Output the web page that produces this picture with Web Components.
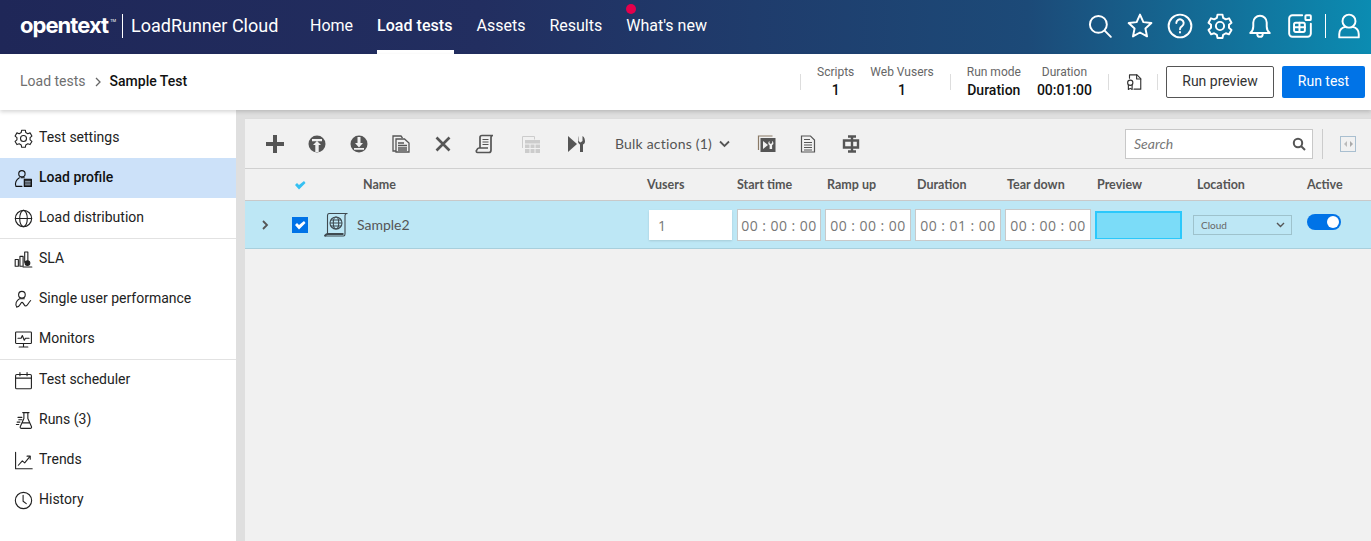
<!DOCTYPE html>
<html lang="en">
<head>
<meta charset="utf-8">
<title>LoadRunner Cloud</title>
<style>
  html, body { margin: 0; height: 541px; overflow: hidden; background: #dfdfdf; }
  body { font-family: Roboto, "Liberation Sans", sans-serif; display: flex; flex-direction: column; }
  .main { display: flex; flex: 1; min-height: 0; }
</style>
</head>
<body>
<lr-header></lr-header>
<lr-subbar></lr-subbar>
<div class="main">
  <lr-sidenav>
    <lr-nav-item icon="gear">Test settings</lr-nav-item>
    <lr-nav-item icon="profile" active>Load profile</lr-nav-item>
    <lr-nav-item icon="globe" divider>Load distribution</lr-nav-item>
    <lr-nav-item icon="sla">SLA</lr-nav-item>
    <lr-nav-item icon="single">Single user performance</lr-nav-item>
    <lr-nav-item icon="monitor" divider>Monitors</lr-nav-item>
    <lr-nav-item icon="calendar">Test scheduler</lr-nav-item>
    <lr-nav-item icon="flask">Runs (3)</lr-nav-item>
    <lr-nav-item icon="trends">Trends</lr-nav-item>
    <lr-nav-item icon="clock">History</lr-nav-item>
  </lr-sidenav>
  <lr-workspace></lr-workspace>
</div>

<script>
const ICONS = {
  search: '<circle cx="10.500" cy="10.500" r="7.800"/><path d="M16.300 16.300l5.700 5.700"/>',
  star: '<path d="M12 1.500l3.100 6.900 7.400.9-5.500 5 1.500 7.300L12 18l-6.500 3.600L7 14.300l-5.500-5 7.400-.9z"/>',
  help: '<circle cx="12" cy="12" r="10.500"/><path d="M8.600 9.300a3.400 3.400 0 1 1 5.300 2.800c-1.300.8-1.900 1.400-1.900 2.900"/><path d="M12 17.600v.5"/>',
  gear: '<circle cx="12" cy="12" r="3.800"/><path d="M9.700 1.500h4.600l.6 3 2.500 1.400 2.900-1 2.300 4-2.300 2v2.800l2.300 2-2.300 4-2.900-1-2.500 1.400-.6 3H9.700l-.6-3-2.500-1.400-2.900 1-2.300-4 2.300-2v-2.800l-2.300-2 2.300-4 2.900 1 2.500-1.400z"/>',
  bell: '<path d="M3 18.500c1.700-1.500 2.800-3 2.800-6V8.800a6.200 6.200 0 0 1 12.400 0v3.700c0 3 1.100 4.500 2.800 6z"/><path d="M9.500 19.500a2.500 2.500 0 0 0 5 0"/>',
  apps: '<path d="M14 2H5a3 3 0 0 0-3 3v14a3 3 0 0 0 3 3h14a3 3 0 0 0 3-3v-9"/><rect x="6.500" y="9" width="10" height="8.500" rx="1.500"/><path d="M11.500 9v8.500M6.500 13.200h10"/><rect x="17" y="2" width="5" height="4.500" rx=".8"/>',
  user: '<circle cx="12" cy="7.500" r="6"/><path d="M3 22.500v-3c0-3.500 2.500-6 5.700-6.700M21 22.500v-3c0-3.500-2.500-6-5.700-6.700M3 22.500h18"/>',
  cert: '<path d="M6 7V2.500h10l5 5v14H12"/><path d="M15.500 2.500v5.500H21"/><circle cx="7" cy="13" r="3.500"/><path d="M4.500 16v6l2.500-1.500L9.500 22v-6"/>',
  profile: '<circle cx="10" cy="6" r="4"/><path d="M6.800 11C3 13 .5 18 2.500 22H10M13 11H9"/><rect x="13" y="13" width="9" height="9" fill="currentColor"/><path d="M14.500 15.500h6M14.500 17.700h6M14.500 20h6" stroke="#cce1f9" stroke-width="1"/>',
  globe: '<circle cx="12" cy="12" r="10.300"/><ellipse cx="12" cy="12" rx="4.800" ry="10.300"/><path d="M1.700 12h20.600"/>',
  sla: '<rect x="1.500" y="12" width="4" height="8.500"/><rect x="7.500" y="8" width="4" height="12.500"/><rect x="13.500" y="2.500" width="4" height="13"/><circle cx="17" cy="16.500" r="3" fill="currentColor"/><path d="M11.500 21.500h11"/>',
  single: '<circle cx="10" cy="6" r="4.200"/><path d="M3.500 21.500c-2.500-3.500-.5-8.500 3.500-10.500h6"/><path d="M3.500 21.500c2.500 0 3.500-1.500 4.500-3.500s2-3.500 3.500-1.500 2 4.500 4 3.500 3-4.500 5.500-6.500"/>',
  monitor: '<rect x="2" y="2.500" width="20" height="14.500" rx="1"/><path d="M12 17v4.500M6.500 21.500h11M5 10.500h4l1.500-3.500 2.500 6 1.500-2.500h4.500"/>',
  calendar: '<rect x="2" y="4.500" width="20" height="18" rx="1.500"/><path d="M2 9h20M7.500 2v4M16.500 2v4"/>',
  flask: '<path d="M11 2h8M12.500 2v7.500L8 19.500c-.6 1.400 0 2.500 1.500 2.500h11c1.500 0 2.100-1.100 1.500-2.500l-4.500-10V2M10 15h10M5 8h5M6 11h4M4 14h3.500M3 17h3"/>',
  trends: '<path d="M2 1.500v21h21"/><path d="M5.500 18l5-5.500 3 2.500 6.500-8"/><path d="M16.500 6.500h4v4"/>',
  clock: '<circle cx="12" cy="12" r="10.300"/><path d="M11.500 5.500v7.500l4 3"/>'
};

class LrIcon extends HTMLElement {
  connectedCallback() {
    const size = this.getAttribute('size') || 18;
    const stroke = this.getAttribute('stroke') || 1.6;
    this.attachShadow({ mode: 'open' }).innerHTML = `
      <style>
        :host { display: inline-flex; width: ${size}px; height: ${size}px; flex: none; }
        svg { width: 100%; height: 100%; }
      </style>
      <svg viewBox="0 0 24 24" fill="none" stroke="currentColor" stroke-width="${stroke}" stroke-linecap="round" stroke-linejoin="round">${ICONS[this.getAttribute('name')]}</svg>`;
  }
}
customElements.define('lr-icon', LrIcon);

class LrHeader extends HTMLElement {
  constructor() {
    super();
    this.attachShadow({ mode: 'open' }).innerHTML = `
      <style>
        :host { display: flex; align-items: center; height: 54px; flex: none; color: #fff; padding-left: 20px;
          background: linear-gradient(90deg, #1f2758 0%, #222e60 35%, #1c4a78 75%, #0b8cb2 100%); }
        .logo { font: 700 22px Inter, Lato, sans-serif; letter-spacing: -.95px; width: 87px; white-space: nowrap; padding-bottom: 4px; }
        .tm { font: 400 4px Roboto, sans-serif; vertical-align: 11px; letter-spacing: 0; margin-left: 2px; }
        .bar { width: 1px; height: 24px; background: #fff; }
        .logo + .bar { margin-left: 15px; margin-bottom: 2px; }
        .product { font-size: 18px; margin-left: 8px; width: 179px; white-space: nowrap; padding-bottom: 4px; }
        nav { display: flex; gap: 24px; height: 100%; }
        a { position: relative; display: flex; align-items: center; font-size: 16px; color: #fff; padding-bottom: 3px; box-sizing: border-box; }
        a.on { font-weight: 500; letter-spacing: .04px; }
        a.on::after { content: ""; position: absolute; left: 0; right: -1px; bottom: 0; height: 4px; background: #fff; }
        .dot { position: absolute; left: 0; top: 4px; width: 10px; height: 10px; border-radius: 50%; background: #e5004c; }
        .tools { display: flex; align-items: center; margin-left: auto; padding-right: 9px; gap: 14px; padding-bottom: 2px; }
        .tools .bar { margin: 0 -4px 0 -2px; }
      </style>
      <span class="logo">opentext<span class="tm">TM</span></span>
      <span class="bar"></span>
      <span class="product">LoadRunner Cloud</span>
      <nav>
        <a>Home</a>
        <a class="on">Load tests</a>
        <a>Assets</a>
        <a>Results</a>
        <a><span class="dot"></span>What's new</a>
      </nav>
      <div class="tools">
        <lr-icon name="search" size="26" stroke="1.800"></lr-icon>
        <lr-icon name="star" size="26" stroke="1.800"></lr-icon>
        <lr-icon name="help" size="26" stroke="1.800"></lr-icon>
        <lr-icon name="gear" size="26" stroke="1.800"></lr-icon>
        <lr-icon name="bell" size="26" stroke="1.800"></lr-icon>
        <lr-icon name="apps" size="26" stroke="1.800"></lr-icon>
        <span class="bar"></span>
        <lr-icon name="user" size="26" stroke="1.800"></lr-icon>
      </div>`;
  }
}
customElements.define('lr-header', LrHeader);

class LrStat extends HTMLElement {
  constructor() {
    super();
    this.attachShadow({ mode: 'open' }).innerHTML = `
      <style>
        :host { display: flex; flex-direction: column; align-items: center; gap: 1px; }
        .k { font-size: 12px; line-height: 16px; color: #666; white-space: nowrap; }
        .v { font-size: 14px; line-height: 18px; font-weight: 500; color: #111; white-space: nowrap; }
      </style>
      <span class="k"><slot name="label"></slot></span>
      <span class="v"><slot></slot></span>`;
  }
}
customElements.define('lr-stat', LrStat);

class LrSubbar extends HTMLElement {
  constructor() {
    super();
    this.attachShadow({ mode: 'open' }).innerHTML = `
      <style>
        :host { display: flex; align-items: center; height: 56px; flex: none; background: #fff; padding: 0 6px 0 20px;
          font-size: 14px; position: relative; z-index: 2; box-shadow: 0 2px 4px rgba(0,0,0,.16); }
        .crumb { color: #6f6f6f; padding-bottom: 2px; }
        svg { width: 8px; height: 10px; margin: 0 8px; color: #666; }
        .cur { font-weight: 500; color: #111; padding-bottom: 2px; }
        .right { display: flex; align-items: center; margin-left: auto; }
        .sep { width: 1px; height: 16px; background: #ddd; }
        lr-stat { margin-top: -1px; }
        .btn { height: 32px; box-sizing: border-box; display: flex; align-items: center; justify-content: center; border-radius: 2px; font-size: 14px; padding-bottom: 2px; }
        .ghost { width: 108px; border: 1px solid #555; color: #333; }
        .primary { width: 83px; background: #0073e7; color: #fff; margin-left: 8px; }
      </style>
      <span class="crumb">Load tests</span>
      <svg viewBox="0 0 8 10" fill="none" stroke="currentColor" stroke-width="1.300"><path d="M2 1l4 4-4 4"/></svg>
      <span class="cur">Sample Test</span>
      <div class="right">
        <span class="sep"></span>
        <lr-stat style="margin-left:16px"><span slot="label">Scripts</span>1</lr-stat>
        <lr-stat style="margin-left:16px"><span slot="label">Web Vusers</span>1</lr-stat>
        <span class="sep" style="margin-left:16px"></span>
        <lr-stat style="margin-left:16px"><span slot="label">Run mode</span>Duration</lr-stat>
        <lr-stat style="margin-left:16px"><span slot="label">Duration</span>00:01:00</lr-stat>
        <span class="sep" style="margin-left:16px"></span>
        <lr-icon name="cert" size="18" stroke="1.500" style="margin-left:16px;color:#333"></lr-icon>
        <span class="sep" style="margin-left:14px"></span>
        <span class="btn ghost" style="margin-left:8px">Run preview</span>
        <span class="btn primary">Run test</span>
      </div>`;
  }
}
customElements.define('lr-subbar', LrSubbar);

class LrSidenav extends HTMLElement {
  constructor() {
    super();
    this.attachShadow({ mode: 'open' }).innerHTML = `
      <style>
        :host { display: block; width: 236px; flex: none; background: #fff; padding-top: 8px; box-sizing: border-box; }
      </style>
      <slot></slot>`;
  }
}
customElements.define('lr-sidenav', LrSidenav);

class LrNavItem extends HTMLElement {
  connectedCallback() {
    this.attachShadow({ mode: 'open' }).innerHTML = `
      <style>
        :host { display: flex; align-items: center; height: 40px; padding-left: 14px; gap: 6px; font-size: 14px; color: #222; }
        :host([active]) { background: #cce1f9; font-weight: 500; color: #111; }
        :host([divider]) { border-bottom: 1px solid #e2e2e2; }
        span { padding-bottom: 2px; }
      </style>
      <lr-icon name="${this.getAttribute('icon')}" size="19" stroke="1.400"></lr-icon>
      <span><slot></slot></span>`;
  }
}
customElements.define('lr-nav-item', LrNavItem);

class LrTool extends HTMLElement {
  constructor() {
    super();
    this.attachShadow({ mode: 'open' }).innerHTML = `
      <style>
        :host { display: inline-flex; width: 20px; height: 20px; align-items: center; justify-content: center; flex: none; }
        ::slotted(svg) { width: 20px; height: 20px; }
      </style>
      <slot></slot>`;
  }
}
customElements.define('lr-tool', LrTool);

class LrToolbar extends HTMLElement {
  constructor() {
    super();
    this.attachShadow({ mode: 'open' }).innerHTML = `
      <style>
        :host { display: flex; align-items: center; height: 49px; flex: none; padding: 0 15px 0 20px; color: #555;
          border-top: 1px solid #ddd; border-bottom: 1px solid #d0d0d0; font-family: Lato, "Open Sans", sans-serif; background: #f1f1f1; }
        lr-tool { margin-right: 22px; }
        svg { display: block; }
        .bulk { display: flex; align-items: center; justify-content: space-between; font-size: 14px; width: 115px; color: #555; margin: 0 27px 0 7px; white-space: nowrap; letter-spacing: .2px; }
        .bulk svg { width: 11px; height: 8px; }
        .search { margin-left: auto; width: 188px; height: 30px; box-sizing: border-box; background: #fff; border: 1px solid #c8c8c8;
          display: flex; align-items: center; justify-content: space-between; padding: 0 6px 0 8px; font-style: italic; font-size: 14px; color: #777; }
        .search svg { width: 14px; height: 14px; color: #555; }
        .sep { width: 1px; height: 30px; background: #ccc; margin: 0 17px 0 9px; }
        .toggle { width: 16px; height: 16px; box-sizing: border-box; border: 1px solid #a9bfd0; display: flex; align-items: center; justify-content: center; gap: 3px; }
        .toggle i { width: 0; height: 0; border: 3px solid transparent; }
        .toggle i:first-child { border-right-color: #bbb; border-left-width: 0; }
        .toggle i:last-child { border-left-color: #aaa; border-right-width: 0; }
      </style>
      <lr-tool><svg viewBox="0 0 20 20" fill="currentColor"><path d="M8 1h4v7h7v4h-7v7H8v-7H1V8h7z"/></svg></lr-tool>
      <lr-tool><svg viewBox="0 0 20 20"><circle cx="10" cy="10" r="8.500" fill="currentColor"/><path d="M5 5h10v2.200H5zM10 7l4 4h-2.300v7H8.300v-7H6z" fill="#f1f1f1"/></svg></lr-tool>
      <lr-tool><svg viewBox="0 0 20 20"><circle cx="10" cy="10" r="8.500" fill="currentColor"/><path d="M8.500 3h3v6h2.500L10 13.500 6 9h2.500zM5 14h10v1.800H5z" fill="#f1f1f1"/></svg></lr-tool>
      <lr-tool><svg viewBox="0 0 20 20" fill="none" stroke="currentColor" stroke-width="1.300"><path d="M6 17H2V2h8l1.500 2"/><path d="M5 18V5h8.500L18 9v9z" fill="#f1f1f1"/><path d="M7 9h6M7 11.500h9M7 14h9M7 16h9"/></svg></lr-tool>
      <lr-tool><svg viewBox="0 0 20 20" fill="none" stroke="currentColor" stroke-width="2.600"><path d="M3.500 3.500l13 13M16.500 3.500l-13 13"/></svg></lr-tool>
      <lr-tool><svg viewBox="0 0 20 20" fill="none" stroke="currentColor" stroke-width="1.700"><path d="M5 14V3.500c0-1 1-2 2-2h11c-1 0-2 1-2 2V16c0 1.500-1 2.500-2 2.500H2.500c-1 0-1.500-1-1-2 .4-1 1.200-2.500 2.500-2.500h9"/><path d="M7.500 5.500h6M7.500 8h6M7.500 10.500h6" stroke-width="1.200"/></svg></lr-tool>
      <lr-tool style="margin-left:4px;margin-right:25px"><svg viewBox="0 0 20 20"><path d="M1.500 14V2.500h12v3" fill="none" stroke="#ccc"/><rect x="4" y="6" width="15" height="13" fill="#ccc"/><path d="M4 10h15M4 14.500h15M9 10v9M14 10v9" stroke="#f1f1f1"/></svg></lr-tool>
      <lr-tool><svg viewBox="0 0 20 20" fill="currentColor"><path d="M2 2l9 8-9 8z"/><path d="M12.500 2v5l2 1.500 2-1.500V2c2 1 2.500 4 2.500 5.500s-1 2.500-2 3V18h-3v-7.500c-1-.6-2-1.500-2-3S12 3 12.500 2z"/></svg></lr-tool>
      <div class="bulk">Bulk actions (1)<svg viewBox="0 0 11 8" fill="none" stroke="currentColor" stroke-width="1.800"><path d="M1 1.500l4.500 4.500L10 1.500"/></svg></div>
      <lr-tool style="margin-right:21px"><svg viewBox="0 0 20 20"><path d="M1.500 16V2h14" fill="none" stroke="#8a7a66" stroke-width="1.200"/><rect x="3.500" y="4" width="15" height="14" fill="currentColor"/><path d="M6 7l5 4-5 4zM12.500 7v2l1.300 1 1.300-1V7c1 .5 1.300 1.500 1.300 2.300 0 1-.6 1.500-1.300 1.900V15h-2.500v-3.800c-.7-.4-1.300-1-1.300-1.900 0-.8.300-1.800 1.200-2.300z" fill="#f1f1f1"/></svg></lr-tool>
      <lr-tool style="margin-right:23px"><svg viewBox="0 0 20 20" fill="none" stroke="currentColor" stroke-width="1.200"><path d="M3.500 2h9l4 4v12h-13z"/><path d="M6 5.500h6M6 8.500h8M6 11h8M6 13.500h8M6 16h8"/></svg></lr-tool>
      <lr-tool><svg viewBox="0 0 20 20" fill="none" stroke="currentColor" stroke-width="2.400"><path d="M3 6.500h14v7H3zM7 2.500h8M7 17.500h8M11 2.500v15"/></svg></lr-tool>
      <div class="search">Search<svg viewBox="0 0 14 14" fill="none" stroke="currentColor" stroke-width="2"><circle cx="6" cy="6" r="4.200"/><path d="M9 9l4 4"/></svg></div>
      <span class="sep"></span>
      <span class="toggle"><i></i><i></i></span>`;
  }
}
customElements.define('lr-toolbar', LrToolbar);

class LrTimeInput extends HTMLElement {
  constructor() {
    super();
    this.attachShadow({ mode: 'open' }).innerHTML = `
      <style>
        :host { display: flex; align-items: center; justify-content: center; height: 32px; box-sizing: border-box; width: 100%;
          background: #fff; border: 1px solid #c9c9c9; font: 14px "Open Sans", sans-serif; color: #777; white-space: nowrap; letter-spacing: .45px; }
      </style>
      <slot></slot>`;
  }
}
customElements.define('lr-time-input', LrTimeInput);

class LrGrid extends HTMLElement {
  constructor() {
    super();
    this.attachShadow({ mode: 'open' }).innerHTML = `
      <style>
        :host { display: block; font-family: Lato, "Open Sans", sans-serif; color: #444; }
        .head, .row { display: grid; grid-template-columns: 47px 33px 32px 288px 90px 90px 90px 90px 90px 98px 114px 1fr; align-items: center; }
        .head { height: 32px; border-bottom: 1px solid #c9c9c9; box-sizing: border-box; font-size: 12.500px; font-weight: 700; color: #555; white-space: nowrap; }
        .head span.pad { padding-left: 2px; }
        .head svg { width: 12px; height: 10px; display: block; margin-left: 2px; }
        .row { height: 48px; box-sizing: border-box; padding-top: 1px; background: #bde7f5; border-bottom: 1px solid #a8cfdc; }
        .chev { width: 8px; height: 12px; margin-left: 16px; color: #555; display: block; }
        .check { width: 16px; height: 16px; background: #0073e7; display: flex; align-items: center; justify-content: center; }
        .check svg { width: 12px; height: 10px; }
        .script { width: 24px; height: 24px; color: #3f4a50; display: block; margin-left: -1px; }
        .name { font-size: 14px; color: #555; padding-bottom: 2px; }
        .cell { padding-right: 4px; }
        .vu { height: 30px; background: #fff; margin: 0 3px 0 4px; display: flex; align-items: center; padding-left: 9px; font: 14px "Open Sans", sans-serif; color: #777; box-shadow: 0 1px 2px rgba(0,0,0,.12); }
        .preview { width: 87px; height: 28px; box-sizing: border-box; background: #7bdcf8; border: 2px solid #2bc8fb; border-bottom-width: 1px; }
        .select { width: 99px; height: 20px; box-sizing: border-box; border: 1px solid #9ec2cc; background: #bde7f5; display: flex; align-items: center; justify-content: space-between; padding: 0 6px 0 7px; font-size: 10px; color: #666; }
        .select svg { width: 9px; height: 6px; color: #555; }
        .switch { width: 34px; height: 16px; border-radius: 8px; background: #0073e7; position: relative; margin-top: -6px; }
        .switch::after { content: ""; position: absolute; right: 2px; top: 2px; width: 12px; height: 12px; border-radius: 50%; background: #fff; }
      </style>
      <div class="head">
        <span></span>
        <svg viewBox="0 0 12 10" fill="#35c0f2"><path d="M1 5l2-2 2 2 5-4 1.500 2L5 9.500z"/></svg>
        <span></span>
        <span style="padding-left:6px">Name</span>
        <span class="pad">Vusers</span>
        <span class="pad">Start time</span>
        <span class="pad">Ramp up</span>
        <span class="pad">Duration</span>
        <span class="pad">Tear down</span>
        <span class="pad">Preview</span>
        <span style="padding-left:4px">Location</span>
        <span>Active</span>
      </div>
      <div class="row">
        <svg class="chev" viewBox="0 0 8 12" fill="none" stroke="currentColor" stroke-width="1.800"><path d="M2 2l4 4-4 4"/></svg>
        <span class="check"><svg viewBox="0 0 12 10" fill="#fff"><path d="M1 5l2-2 2 2 5-4 1.500 2L5 9.500z"/></svg></span>
        <svg class="script" viewBox="0 0 24 24" fill="none" stroke="currentColor" stroke-width="1.100"><path d="M3.500 21V2.500C3.500 1.500 4.500.5 5.500.5h18c-1.500 0-2.500 1-2.500 2V21c0 1-.7 2-1.500 2H.5"/><path d="M.5 23c1-1 2-2 3-2h16" stroke-width="1.800"/><circle cx="12" cy="10" r="6"/><ellipse cx="12" cy="10" rx="2.700" ry="6"/><path d="M6 10h12M7 7h10M7 13h10"/></svg>
        <span class="name">Sample2</span>
        <div class="vu">1</div>
        <div class="cell" style="padding-left:2px"><lr-time-input>00 : 00 : 00</lr-time-input></div>
        <div class="cell"><lr-time-input>00 : 00 : 00</lr-time-input></div>
        <div class="cell"><lr-time-input>00 : 01 : 00</lr-time-input></div>
        <div class="cell"><lr-time-input>00 : 00 : 00</lr-time-input></div>
        <div class="preview"></div>
        <div class="select">Cloud<svg viewBox="0 0 9 6" fill="none" stroke="currentColor" stroke-width="1.400"><path d="M1 1l3.500 3.500L8 1"/></svg></div>
        <div class="switch"></div>
      </div>`;
  }
}
customElements.define('lr-grid', LrGrid);

class LrWorkspace extends HTMLElement {
  constructor() {
    super();
    this.attachShadow({ mode: 'open' }).innerHTML = `
      <style>
        :host { display: block; flex: 1; min-width: 0; margin: 8px 0 0 9px; background: #f1f1f1; }
      </style>
      <lr-toolbar></lr-toolbar>
      <lr-grid></lr-grid>`;
  }
}
customElements.define('lr-workspace', LrWorkspace);
</script>
</body>
</html>
